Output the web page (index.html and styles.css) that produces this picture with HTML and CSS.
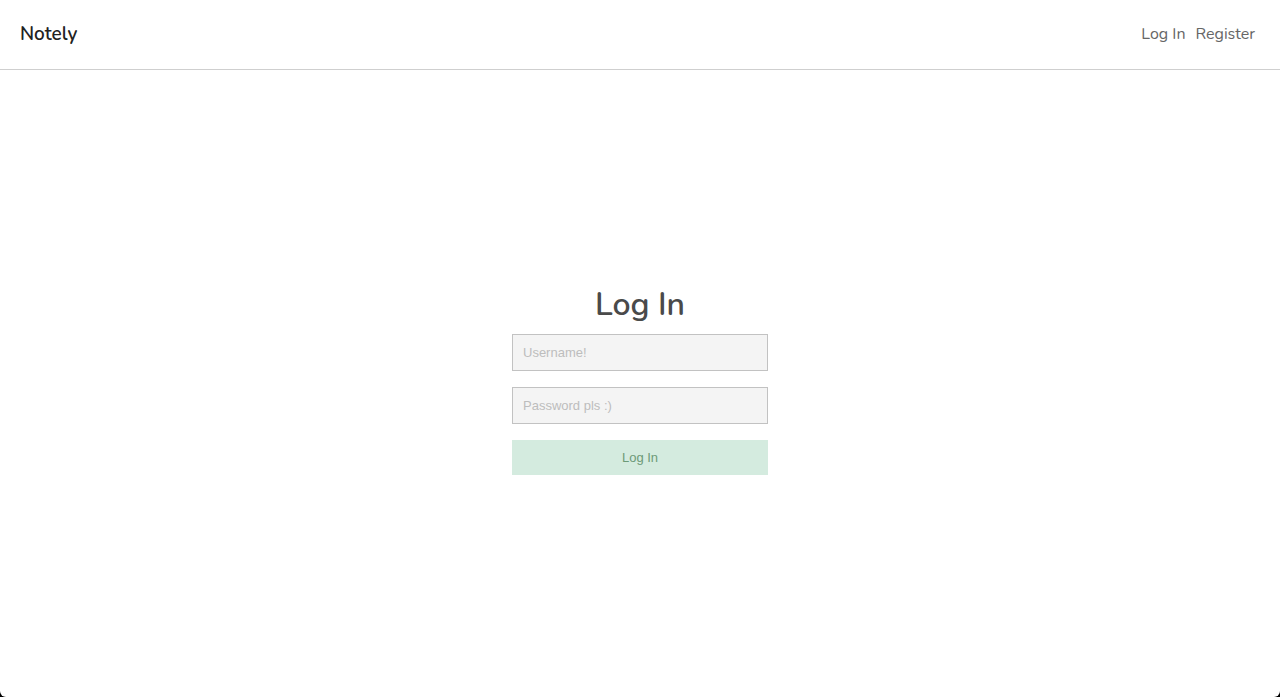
FILE: index.html
```html
<!DOCTYPE html>
<html lang="en">
<head>
<meta charset="utf-8">
<title>Notely</title>
<link rel="stylesheet" href="styles.css">
</head>
<body>
<div class="app">
  <header class="navbar">
    <a class="brand" href="#">Notely</a>
    <nav class="nav-links">
      <a href="#">Log In</a>
      <a href="#">Register</a>
    </nav>
  </header>
  <main class="main">
    <form class="login-form">
      <h1 class="title">Log In</h1>
      <input class="field" type="text" placeholder="Username!">
      <input class="field" type="password" placeholder="Password pls :)">
      <button class="submit" type="button">Log In</button>
    </form>
  </main>
</div>
</body>
</html>
```
FILE: styles.css
```css
html, body {
  margin: 0;
  padding: 0;
  height: 100%;
  background: #000;
}
.app {
  height: 697px;
  background: #fff;
  border-radius: 0 0 6px 6px;
  display: flex;
  flex-direction: column;
  font-family: Nunito, Lato, "Noto Sans", sans-serif;
  overflow: hidden;
}
.navbar {
  height: 69px;
  border-bottom: 1px solid #cfcfcf;
  display: flex;
  align-items: center;
  justify-content: space-between;
  padding: 0 25px 0 20px;
  box-sizing: content-box;
  flex: none;
}
.brand {
  color: #222;
  font-size: 19px;
  font-weight: 600;
  text-decoration: none;
  padding-bottom: 2px;
}
.nav-links {
  display: flex;
  gap: 10px;
  padding-bottom: 2px;
}
.nav-links a {
  color: #666;
  font-size: 16px;
  text-decoration: none;
}
.main {
  flex: 1;
  display: flex;
  align-items: center;
  justify-content: center;
}
.login-form {
  width: 256px;
  display: flex;
  flex-direction: column;
  margin-top: -8px;
}
.title {
  margin: 1px 0 9px;
  text-align: center;
  font-size: 32px;
  font-weight: 600;
  color: #4a4a4a;
  line-height: 40px;
}
.field {
  height: 37px;
  box-sizing: border-box;
  border: 1px solid #c2c2c2;
  background: #f4f4f4;
  padding: 0 10px;
  font-family: "Liberation Sans", Arial, sans-serif;
  font-size: 13px;
  color: #333;
  margin: 0 0 16px;
  outline: none;
}
.field::placeholder {
  color: #bdbdbd;
}
.submit {
  height: 35px;
  border: none;
  background: #d4ebdf;
  color: #6d9a78;
  font-family: "Liberation Sans", Arial, sans-serif;
  font-size: 13px;
  cursor: pointer;
  padding: 0;
}
```
